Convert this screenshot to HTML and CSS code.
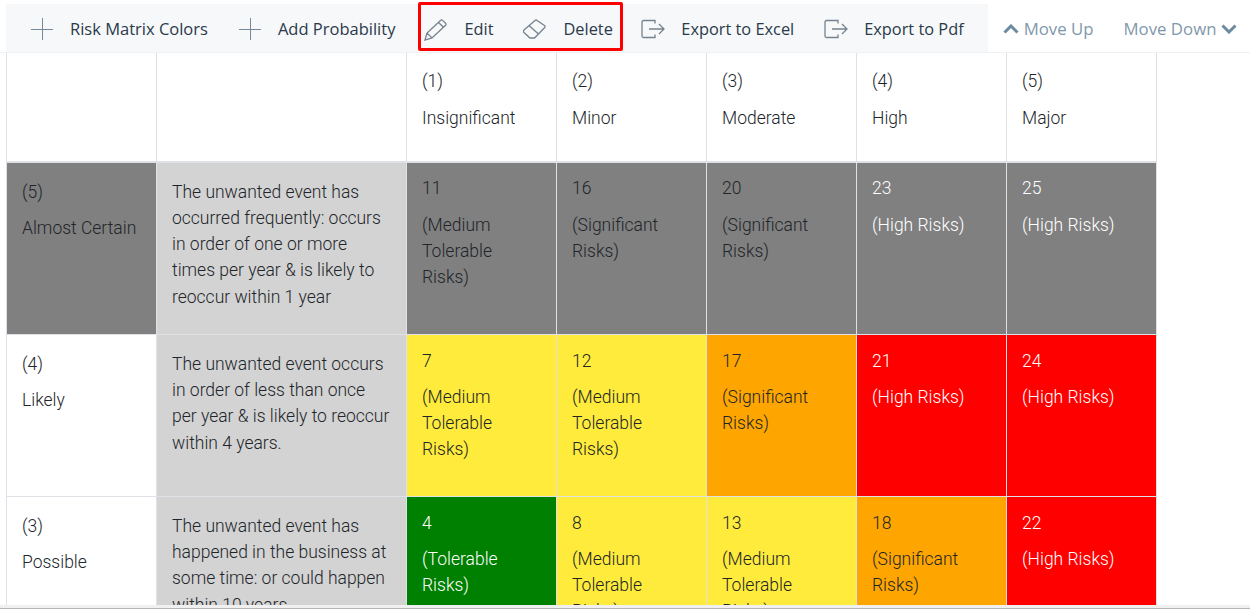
FILE: index.html
```html
<!DOCTYPE html>
<html lang="en">
<head>
<meta charset="utf-8">
<title>Risk Matrix</title>
<link rel="stylesheet" href="styles.css">
</head>
<body>
<div class="page">
  <div class="topbar">
    <div class="toolbar">
      <a class="tool wide"><svg class="ico plus" viewBox="0 0 24 24"><path d="M12.500 1v22M1 12.500h22"/></svg>Risk Matrix Colors</a>
      <a class="tool wide"><svg class="ico plus" viewBox="0 0 24 24"><path d="M12.500 1v22M1 12.500h22"/></svg>Add Probability</a>
      <div class="marked">
        <a class="tool"><svg class="ico" viewBox="0 0 24 24"><path d="M1 23l2-7L16.500 3.500c.7-.7 1.500-.7 2.100-.1l3 2.800c.6.600.6 1.400 0 2L8 20.900zM3 16l5 4.900M14.500 5.500l5 4.800"/></svg>Edit</a>
        <a class="tool"><svg class="ico" viewBox="0 0 24 24"><path d="M1 13L12 3.500c.7-.6 1.500-.6 2.100 0L21.500 8.500c.8.700.8 1.600 0 2.300L11.500 21H7L1 15.500c-.7-.7-.7-1.800 0-2.500zM6.500 9l9 8"/></svg>Delete</a>
      </div>
      <a class="tool"><svg class="ico" viewBox="0 0 24 24"><path d="M14 6.500V3.500H2.500c-.8 0-1.500.7-1.500 1.500v14c0 .8.700 1.500 1.500 1.500H14v-3M8 12h15M18 7l5 5-5 5"/></svg>Export to Excel</a>
      <a class="tool"><svg class="ico" viewBox="0 0 24 24"><path d="M14 6.500V3.500H2.500c-.8 0-1.500.7-1.500 1.500v14c0 .8.700 1.500 1.500 1.500H14v-3M8 12h15M18 7l5 5-5 5"/></svg>Export to Pdf</a>
    </div>
    <a class="mover"><svg class="chev" viewBox="0 0 16 10"><path d="M1.500 8.500L8 2l6.500 6.500"/></svg>Move Up</a>
    <a class="mover">Move Down<svg class="chev" viewBox="0 0 16 10"><path d="M1.500 1.500L8 8l6.500-6.500"/></svg></a>
  </div>
  <table class="matrix">
    <colgroup>
      <col class="c-label"><col class="c-desc"><col class="c-num"><col class="c-num"><col class="c-num"><col class="c-num"><col class="c-num">
    </colgroup>
    <thead>
      <tr>
        <th></th><th></th>
        <th><p>(1)</p><p>Insignificant</p></th>
        <th><p>(2)</p><p>Minor</p></th>
        <th><p>(3)</p><p>Moderate</p></th>
        <th><p>(4)</p><p>High</p></th>
        <th><p>(5)</p><p>Major</p></th>
      </tr>
    </thead>
    <tbody>
      <tr>
        <td class="label grey"><p>(5)</p><p>Almost Certain</p></td>
        <td class="desc"><p>The unwanted event has occurred frequently: occurs in order of one or more times per year &amp; is likely to reoccur within 1 year</p></td>
        <td class="risk grey"><p>11</p><p>(Medium Tolerable Risks)</p></td>
        <td class="risk grey"><p>16</p><p>(Significant Risks)</p></td>
        <td class="risk grey"><p>20</p><p>(Significant Risks)</p></td>
        <td class="risk grey light"><p>23</p><p>(High Risks)</p></td>
        <td class="risk grey light"><p>25</p><p>(High Risks)</p></td>
      </tr>
      <tr>
        <td class="label"><p>(4)</p><p>Likely</p></td>
        <td class="desc"><p>The unwanted event occurs in order of less than once per year &amp; is likely to reoccur within 4 years.</p></td>
        <td class="risk yellow"><p>7</p><p>(Medium Tolerable Risks)</p></td>
        <td class="risk yellow"><p>12</p><p>(Medium Tolerable Risks)</p></td>
        <td class="risk orange"><p>17</p><p>(Significant Risks)</p></td>
        <td class="risk red light"><p>21</p><p>(High Risks)</p></td>
        <td class="risk red light"><p>24</p><p>(High Risks)</p></td>
      </tr>
      <tr>
        <td class="label"><p>(3)</p><p>Possible</p></td>
        <td class="desc"><p>The unwanted event has happened in the business at some time: or could happen within 10 years</p></td>
        <td class="risk green light"><p>4</p><p>(Tolerable Risks)</p></td>
        <td class="risk yellow"><p>8</p><p>(Medium Tolerable Risks)</p></td>
        <td class="risk yellow"><p>13</p><p>(Medium Tolerable Risks)</p></td>
        <td class="risk orange"><p>18</p><p>(Significant Risks)</p></td>
        <td class="risk red light"><p>22</p><p>(High Risks)</p></td>
      </tr>
    </tbody>
  </table>
</div>
<div class="foot"></div>
</body>
</html>
```
FILE: styles.css
```css
* { box-sizing: border-box; }
html, body { margin: 0; height: 100%; overflow: hidden; background: #fff; }
.page { height: 605px; overflow: hidden; padding: 4px 0 0 6px; }
.topbar {
  display: flex;
  margin-left: -6px;
  padding-left: 6px;
  border-bottom: 1px solid #eff0f2;
  height: 49px;
  font-family: "Open Sans", "Noto Sans", sans-serif;
  font-size: 16.35px;
}
.toolbar { display: flex; background: #f6f8fa; padding: 0 9px; height: 48px; }
.marked { display: flex; position: relative; margin: 0 -1.5px 0 -1px; }
.marked::after {
  content: "";
  position: absolute;
  left: 9px; right: 5px; top: -2px; bottom: 1px;
  border: 3px solid #f00;
  border-radius: 2px;
}
.tool {
  display: flex;
  align-items: center;
  padding: 1px 15px 0;
  color: #2b3a4a;
  white-space: nowrap;
}
.wide { font-size: 16.5px; }
.ico {
  width: 24px; height: 24px;
  margin-right: 16px;
  fill: none;
  stroke: #75828f;
  stroke-width: 1.3;
}
.plus { stroke: #76889a; stroke-width: 1; }
.mover {
  display: flex;
  align-items: center;
  padding: 1px 15px 0;
  gap: 5px;
  color: #7f98ab;
  font-size: 16.8px;
  white-space: nowrap;
  height: 48px;
}
.chev { width: 16px; height: 10px; fill: none; stroke: #6c8aa0; stroke-width: 3; }
.matrix {
  table-layout: fixed;
  border-collapse: collapse;
  width: 1151px;
  font-family: Roboto, sans-serif;
  font-weight: 300;
  font-size: 17.5px;
  line-height: 26.25px;
  color: #212529;
}
.c-label, .c-num { width: 150px; }
.c-desc { width: 250px; }
.matrix p { margin: 0 0 10px; }
.matrix th, .matrix td {
  border: 1px solid #dee2e6;
  padding: 15.5px 15px 14.5px;
  vertical-align: top;
  text-align: left;
  font-weight: 300;
}
.matrix th { height: 109px; padding-top: 15px; border-bottom-width: 2px; border-top: 0; }
.matrix th p { margin-bottom: 10.5px; }
.matrix td.risk { padding: 12.25px 15px 23.75px; }
.matrix td.desc { background: #d3d3d3; }
.grey { background: #808080; }
.yellow { background: #ffeb3b; }
.orange { background: #ffa500; }
.red { background: #f00; }
.green { background: #008000; }
.light { color: #fff; }
.foot { position: fixed; left: 0; right: 0; top: 605px; height: 4px; background: #f0f0f0; border-bottom: 1px solid #b5b5b5; }
```
